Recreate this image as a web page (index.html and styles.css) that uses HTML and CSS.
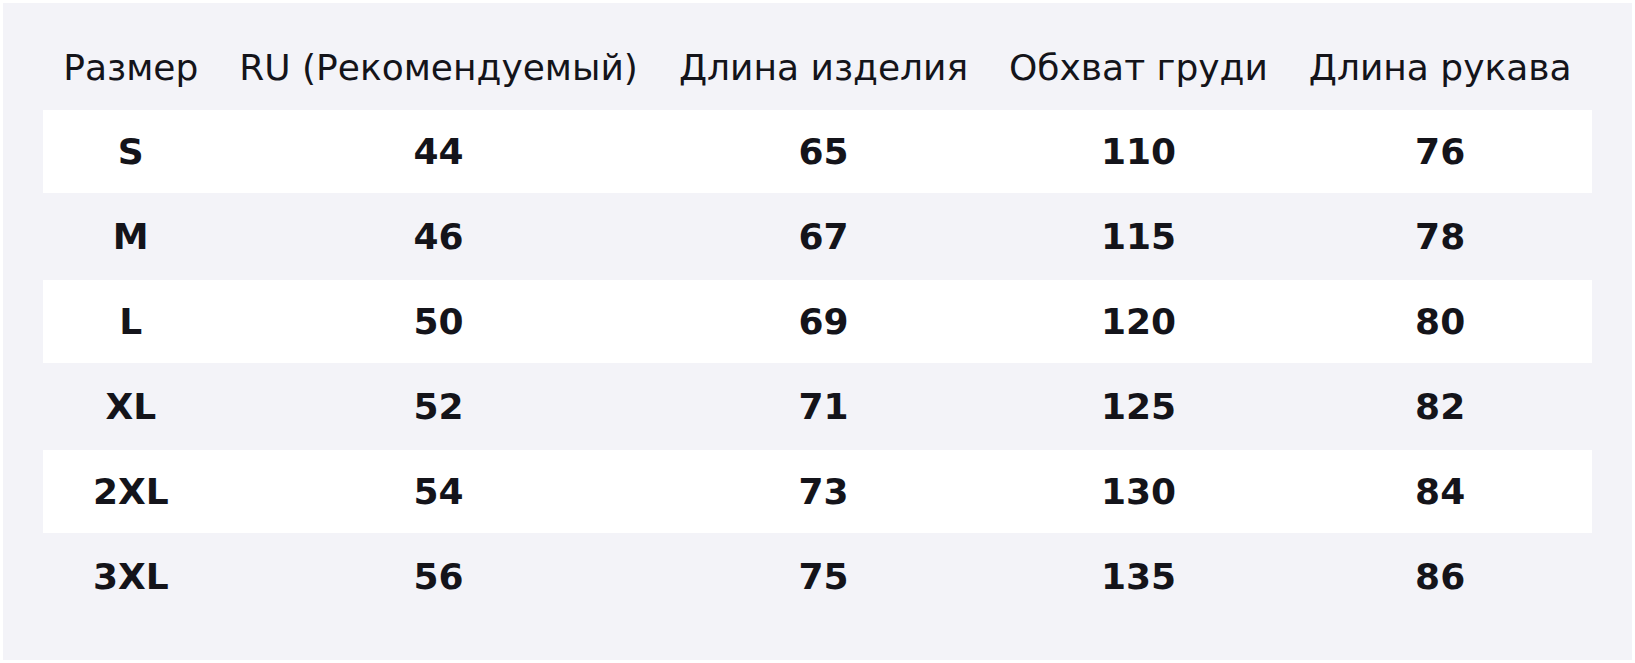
FILE: index.html
```html
<!DOCTYPE html>
<html lang="ru">
<head>
<meta charset="utf-8">
<title>Таблица размеров</title>
<link rel="stylesheet" href="styles.css">
</head>
<body>
<div class="panel">
  <table class="sizes">
    <thead>
      <tr>
        <th>Размер</th>
        <th>RU (Рекомендуемый)</th>
        <th>Длина изделия</th>
        <th>Обхват груди</th>
        <th>Длина рукава</th>
      </tr>
    </thead>
    <tbody>
      <tr class="odd"><td>S</td><td>44</td><td>65</td><td>110</td><td>76</td></tr>
      <tr><td>M</td><td>46</td><td>67</td><td>115</td><td>78</td></tr>
      <tr class="odd"><td>L</td><td>50</td><td>69</td><td>120</td><td>80</td></tr>
      <tr><td>XL</td><td>52</td><td>71</td><td>125</td><td>82</td></tr>
      <tr class="odd"><td>2XL</td><td>54</td><td>73</td><td>130</td><td>84</td></tr>
      <tr><td>3XL</td><td>56</td><td>75</td><td>135</td><td>86</td></tr>
    </tbody>
  </table>
</div>
</body>
</html>
```

FILE: styles.css
```css
html, body {
  margin: 0;
  padding: 0;
  background: #ffffff;
}

body {
  padding: 3px;
  font-family: "DejaVu Sans", "Liberation Sans", sans-serif;
  color: #14141a;
}

.panel {
  background: #f3f3f8;
  width: 1629px;
  height: 657px;
  box-sizing: border-box;
  padding: 40px;
}

.sizes {
  width: 100%;
  border-collapse: separate;
  border-spacing: 0 2px;
}

.sizes th {
  font-weight: normal;
  font-size: 36px;
  line-height: 42px;
  height: 63px;
  padding: 2px 20px 19px;
  box-sizing: border-box;
  vertical-align: top;
  text-align: center;
  white-space: nowrap;
}

.sizes td {
  font-weight: bold;
  font-size: 36px;
  line-height: 42px;
  height: 83px;
  padding: 0 20px;
  box-sizing: border-box;
  text-align: center;
  vertical-align: middle;
}

.sizes tr.odd td {
  background: #ffffff;
}
```
